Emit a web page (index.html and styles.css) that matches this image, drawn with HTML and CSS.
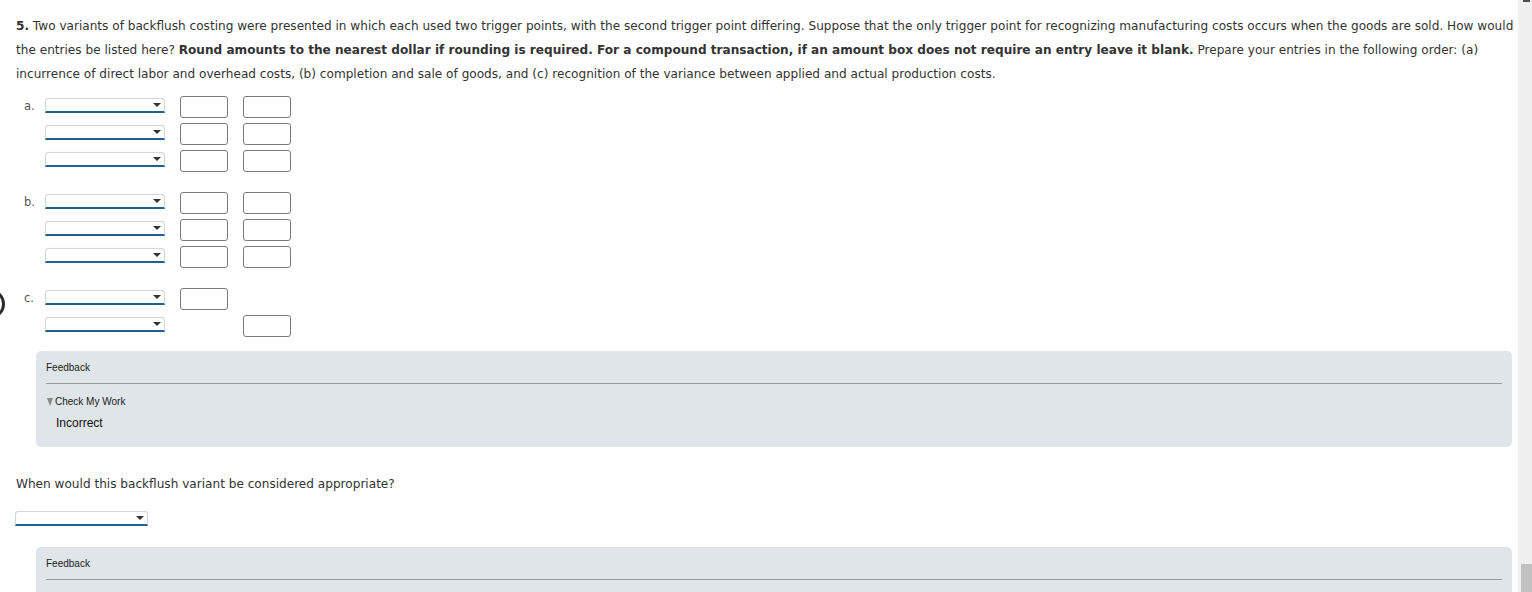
FILE: index.html
```html
<!DOCTYPE html>
<html lang="en">
<head>
    <meta charset="UTF-8">
    <title>Backflush Costing</title>
    <link rel="stylesheet" href="styles.css">
</head>
<body>
    <div class="page">
        <div class="main">
            <div class="side-marker"></div>

            <p class="question"><b>5.</b> Two variants of backflush costing were presented in which each used two trigger points, with the second trigger point differing. Suppose that the only trigger point for recognizing manufacturing costs occurs when the goods are sold. How would<br>the entries be listed here? <b>Round amounts to the nearest dollar if rounding is required. For a compound transaction, if an amount box does not require an entry leave it blank.</b> Prepare your entries in the following order: (a)<br>incurrence of direct labor and overhead costs, (b) completion and sale of goods, and (c) recognition of the variance between applied and actual production costs.</p>

            <div class="entries">
                <div class="entry-group">
                    <div class="entry-row">
                        <span class="entry-label">a.</span>
                        <div class="select"></div>
                        <div class="amount"></div>
                        <div class="amount"></div>
                    </div>
                    <div class="entry-row">
                        <span class="entry-label"></span>
                        <div class="select"></div>
                        <div class="amount"></div>
                        <div class="amount"></div>
                    </div>
                    <div class="entry-row">
                        <span class="entry-label"></span>
                        <div class="select"></div>
                        <div class="amount"></div>
                        <div class="amount"></div>
                    </div>
                </div>

                <div class="entry-group">
                    <div class="entry-row">
                        <span class="entry-label">b.</span>
                        <div class="select"></div>
                        <div class="amount"></div>
                        <div class="amount"></div>
                    </div>
                    <div class="entry-row">
                        <span class="entry-label"></span>
                        <div class="select"></div>
                        <div class="amount"></div>
                        <div class="amount"></div>
                    </div>
                    <div class="entry-row">
                        <span class="entry-label"></span>
                        <div class="select"></div>
                        <div class="amount"></div>
                        <div class="amount"></div>
                    </div>
                </div>

                <div class="entry-group last">
                    <div class="entry-row">
                        <span class="entry-label">c.</span>
                        <div class="select"></div>
                        <div class="amount"></div>
                        <div class="amount empty"></div>
                    </div>
                    <div class="entry-row">
                        <span class="entry-label"></span>
                        <div class="select"></div>
                        <div class="amount empty"></div>
                        <div class="amount"></div>
                    </div>
                </div>
            </div>

            <div class="feedback">
                <div class="feedback-title">Feedback</div>
                <div class="feedback-rule"></div>
                <div class="check-work"><span class="check-arrow"></span>Check My Work</div>
                <div class="result">Incorrect</div>
            </div>

            <p class="question second">When would this backflush variant be considered appropriate?</p>

            <div class="select wide"></div>

            <div class="feedback">
                <div class="feedback-title">Feedback</div>
                <div class="feedback-rule"></div>
            </div>
        </div>

        <div class="scrollbar">
            <div class="scroll-arrow"></div>
            <div class="scroll-thumb"></div>
        </div>
    </div>
</body>
</html>
```

FILE: styles.css
```css
* {
    margin: 0;
    padding: 0;
    box-sizing: border-box;
}

body {
    font-family: "DejaVu Sans", Verdana, sans-serif;
    color: #333;
    background: white;
    overflow: hidden;
}

.page {
    display: flex;
    height: 592px;
}

.main {
    flex: 1;
    position: relative;
    padding: 14px 0 0 16px;
    overflow: hidden;
}

.side-marker {
    position: absolute;
    left: -25px;
    top: 289px;
    width: 30px;
    height: 30px;
    border: 3px solid #2a2a2a;
    border-radius: 50%;
}

.question {
    font-size: 12.1px;
    line-height: 24px;
    margin-right: -14px;
}

.question b {
    font-weight: bold;
}

.question.second {
    margin-top: 25px;
}

/* journal entry rows */
.entries {
    margin-top: 10px;
}

.entry-group {
    display: flex;
    flex-direction: column;
    gap: 6px;
    margin-bottom: 21px;
}

.entry-group.last {
    margin-bottom: 15px;
}

.entry-row {
    display: flex;
    align-items: flex-start;
    height: 21px;
}

.entry-label {
    width: 29px;
    padding-left: 8px;
    font-size: 11.5px;
    line-height: 20px;
    color: #555;
}

.select {
    position: relative;
    width: 120px;
    height: 15px;
    margin-top: 2px;
    background: white;
    border: 1px solid #d6d6d6;
    border-bottom: 2px solid #22608f;
    border-radius: 4px 4px 0 0;
    box-shadow: 0 0 1px rgba(0, 0, 0, 0.15);
}

.select::after {
    content: "";
    position: absolute;
    right: 3px;
    top: 4px;
    border-left: 4px solid transparent;
    border-right: 4px solid transparent;
    border-top: 4px solid #333;
}

.select.wide {
    width: 133px;
    margin: 15px 0 0 -1px;
}

.amount {
    width: 48px;
    height: 22px;
    margin-left: 15px;
    border: 1.5px solid #7a7a7a;
    border-radius: 3px;
    background: white;
}

.amount.empty {
    visibility: hidden;
}

/* feedback panel */
.feedback {
    margin: 0 6px 0 20px;
    background: #dfe5e8;
    border-radius: 5px;
    padding: 9px 10px 16px 10px;
    font-family: "Liberation Sans", Arial, sans-serif;
}

.select.wide + .feedback {
    margin-top: 21px;
}

.feedback-title {
    font-size: 10px;
    line-height: 16px;
    color: #222;
}

.feedback-rule {
    height: 1px;
    background: #999;
    margin-top: 7px;
}

.check-work {
    margin-top: 11px;
    font-size: 10px;
    line-height: 14px;
    color: #222;
}

.check-arrow {
    display: inline-block;
    vertical-align: -1px;
    margin: 0 2px 0 1px;
    border-left: 3.5px solid transparent;
    border-right: 3.5px solid transparent;
    border-top: 8px solid #8a8a8a;
}

.result {
    margin-top: 6px;
    padding-left: 10px;
    font-size: 12px;
    line-height: 16px;
    color: #111;
}

/* fake scrollbar */
.scrollbar {
    width: 14px;
    background: #f0f0f0;
    display: flex;
    flex-direction: column;
    justify-content: space-between;
}

.scroll-arrow {
    width: 7px;
    height: 2px;
    margin-left: 5px;
    background: #505050;
}

.scroll-thumb {
    width: 11px;
    height: 28px;
    margin-left: 3px;
    background: #c1c1c1;
}
```
